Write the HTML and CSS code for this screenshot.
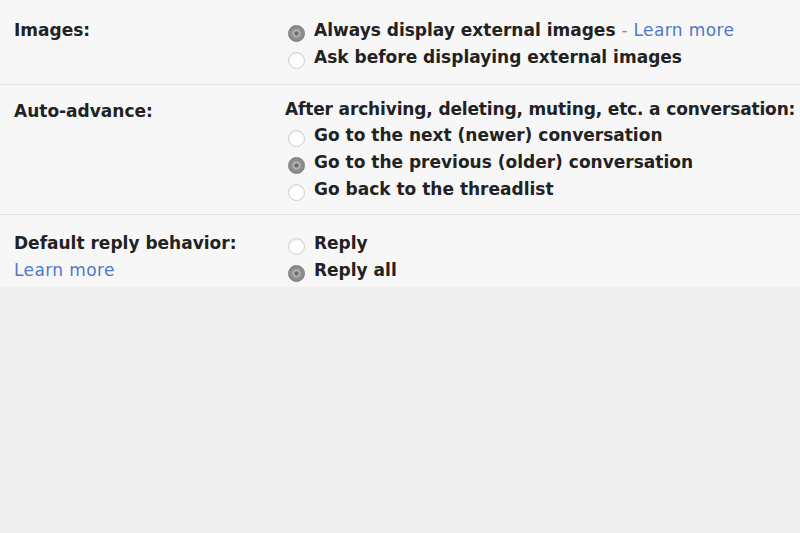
FILE: index.html
```html
<!DOCTYPE html>
<html>
<head>
<meta charset="utf-8">
<link rel="stylesheet" href="styles.css">
</head>
<body>
<div class="settings">
  <div class="row row-first">
    <div class="label">Images:</div>
    <div class="value">
      <div class="option"><span class="radio checked"></span><span>Always display external images <span class="dash">-</span> <a class="link">Learn more</a></span></div>
      <div class="option"><span class="radio"></span><span>Ask before displaying external images</span></div>
    </div>
  </div>
  <div class="row row-advance">
    <div class="label">Auto-advance:</div>
    <div class="value">
      <div class="heading">After archiving, deleting, muting, etc. a conversation:</div>
      <div class="option"><span class="radio"></span><span>Go to the next (newer) conversation</span></div>
      <div class="option"><span class="radio checked"></span><span>Go to the previous (older) conversation</span></div>
      <div class="option"><span class="radio"></span><span>Go back to the threadlist</span></div>
    </div>
  </div>
  <div class="row row-last">
    <div class="label">Default reply behavior:<br><a class="link">Learn more</a></div>
    <div class="value">
      <div class="option"><span class="radio"></span><span>Reply</span></div>
      <div class="option"><span class="radio checked"></span><span>Reply all</span></div>
    </div>
  </div>
</div>
</body>
</html>
```
FILE: styles.css
```css
html, body {
  margin: 0;
  padding: 0;
  background: #efefef;
}
body {
  font-family: "DejaVu Sans", "Liberation Sans", sans-serif;
  font-size: 17px;
  font-weight: bold;
  color: #222;
  width: 800px;
  height: 533px;
  overflow: hidden;
}
.settings {
  background: #f7f7f7;
}
.row {
  display: grid;
  grid-template-columns: 285px 1fr;
  padding: 14px 0 13px;
  border-bottom: 1px solid #e4e4e4;
  line-height: 27px;
}
.row-first {
  padding-top: 17px;
}
.row-advance {
  padding-top: 12px;
  padding-bottom: 11px;
}
.row-last {
  padding-top: 15px;
  padding-bottom: 3px;
  border-bottom: none;
}
.label {
  padding-left: 14px;
}
.row-advance .label {
  padding-top: 1px;
}
.value {
  min-width: 0;
}
.heading {
  line-height: 25px;
  white-space: nowrap;
  letter-spacing: -0.15px;
}
.option {
  display: flex;
  align-items: center;
  white-space: nowrap;
}
.radio {
  flex: none;
  width: 15px;
  height: 15px;
  border-radius: 50%;
  border: 1px solid #cdcdcd;
  background: #fefefe;
  margin: 5px 9px 0 3px;
  box-sizing: content-box;
  box-shadow: inset 0 1px 2px rgba(0,0,0,0.08);
}
.radio.checked {
  background: radial-gradient(circle, #6a6a6a 0 1.5px, #b0b0b0 2.5px 3.5px, #8e8e8e 5px, #848484 100%);
  border-color: #7c7c7c;
  box-shadow: none;
}
.link {
  color: #4f78cc;
  font-weight: normal;
  letter-spacing: 0.4px;
}
.dash {
  color: #8a94b0;
  font-weight: normal;
}
```
